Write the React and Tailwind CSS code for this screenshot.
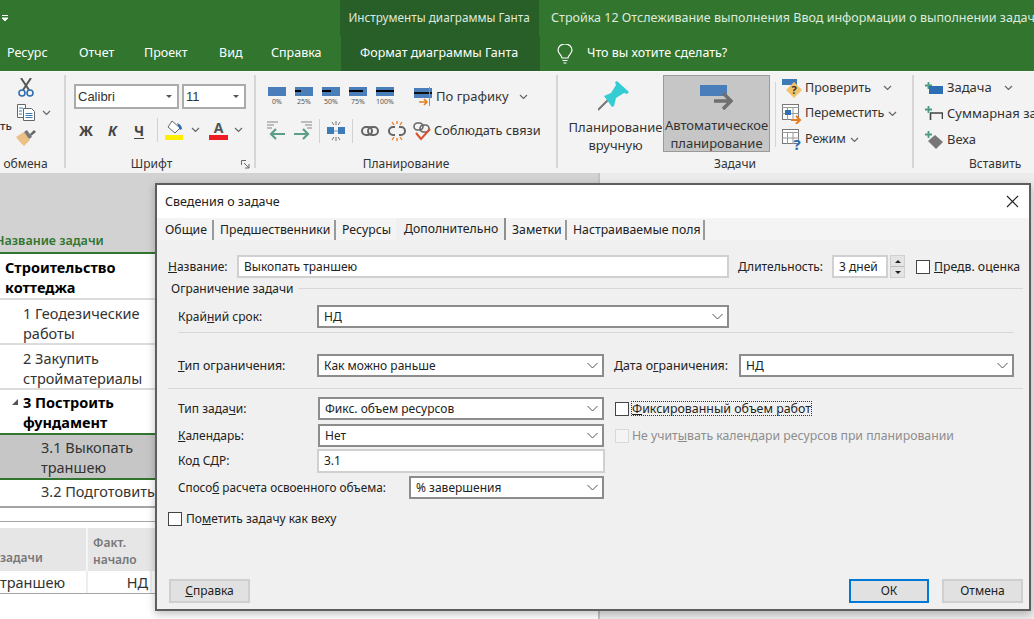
import React from "react";

const Chevron = ({ className = "" }) => (
  <svg width="9" height="6" viewBox="0 0 9 6" className={`shrink-0 ${className}`}>
    <path d="M1 1l3.500 3.500L8 1" fill="none" stroke="#666" strokeWidth="1.200" />
  </svg>
);

const SelectChevron = () => (
  <svg width="11" height="7" viewBox="0 0 11 7" className="shrink-0">
    <path d="M.5 1l5 5 5-5" fill="none" stroke="#555" strokeWidth="1" />
  </svg>
);

const Scissors = () => (
  <svg width="16" height="19" viewBox="0 0 16 19" className="shrink-0">
    <path d="M3 0l8 12M13 0L5 12" stroke="#555" strokeWidth="2" fill="none" />
    <circle cx="4" cy="15" r="3" fill="none" stroke="#2f6fae" strokeWidth="1.600" />
    <circle cx="12" cy="15" r="3" fill="none" stroke="#2f6fae" strokeWidth="1.600" />
  </svg>
);

const CopyIcon = () => (
  <svg width="18" height="17" viewBox="0 0 18 17" className="shrink-0">
    <path d="M.5.5h8v13h-8z" fill="#fff" stroke="#666" />
    <path d="M6.500 4.500h8l3 3v9h-11z" fill="#fff" stroke="#666" />
    <path d="M2 4h4M2 7h3M2 10h3" stroke="#3d7ab8" />
    <path d="M8.500 9.500h7M8.500 11.500h7M8.500 13.500h7" stroke="#3d7ab8" />
  </svg>
);

const Brush = () => (
  <svg width="20" height="17" viewBox="0 0 20 17" className="shrink-0">
    <path d="M0 8l8-5 6 8-6 6C5 14 2 11 0 8z" fill="#eac084" />
    <path d="M8 3l3-2 5 7-3 2z" fill="#777" />
    <path d="M14 5l4-4 2 2-5 4z" fill="#666" />
  </svg>
);

const FillIcon = () => (
  <svg width="19" height="20" viewBox="0 0 19 20" className="shrink-0">
    <path d="M7 1l8 7-5 5-7-6z" fill="#fff" stroke="#666" />
    <path d="M12 3c3 1 5 3 5 6l-2 1z" fill="#2d6fb2" />
    <rect x="0" y="15" width="18" height="5" fill="#ffee00" />
  </svg>
);

const ProgressBar = ({ line, label }) => (
  <div className="flex w-[18px] flex-col items-center">
    <div className="relative h-[9px] w-[18px] bg-[#4a7ebb]">
      {line > 0 && <div className="absolute left-0 top-[3px] h-[2px] bg-black" style={{ width: line }} />}
    </div>
    <span className="mt-[1px] text-[7px] leading-[9px] text-[#555]">{label}</span>
  </div>
);

const OnTrackIcon = () => (
  <svg width="19" height="19" viewBox="0 0 19 19" className="shrink-0">
    <rect x="0" y="1" width="18" height="10" fill="#4a7ebb" />
    <rect x="0" y="5" width="18" height="2" fill="#111" />
    <path d="M15.500 0v19" stroke="#e87d1e" />
    <path d="M5 15h8M10 12l3 3-3 3" stroke="#e87d1e" strokeWidth="1.600" fill="none" />
  </svg>
);

const ArrowLines = ({ flip }) => (
  <svg width="18" height="20" viewBox="0 0 18 20" className="shrink-0" style={{ transform: flip ? "scaleX(-1)" : undefined }}>
    <path d="M0 1h11M0 4h7M0 7h5" stroke="#aaa" strokeWidth="1.500" />
    <path d="M18 13H4M9 8l-5 5 5 5" stroke="#5b9e8a" strokeWidth="2.200" fill="none" />
  </svg>
);

const SplitIcon = () => (
  <svg width="18" height="20" viewBox="0 0 18 20" className="shrink-0">
    <path d="M9 0v4M5 1l2 3M13 1l-2 3M9 16v4M5 19l2-3M13 19l-2-3" stroke="#777" />
    <rect x="0" y="6" width="7" height="7" fill="#3d7ab8" />
    <rect x="11" y="6" width="7" height="7" fill="#3d7ab8" />
    <rect x="7" y="9" width="4" height="2" fill="#a9c6e3" />
  </svg>
);

const LinkIcon = () => (
  <svg width="18" height="10" viewBox="0 0 18 10" className="shrink-0">
    <rect x="1" y="1" width="10" height="8" rx="4" fill="none" stroke="#666" strokeWidth="2" />
    <rect x="7" y="1" width="10" height="8" rx="4" fill="none" stroke="#666" strokeWidth="2" />
  </svg>
);

const UnlinkIcon = () => (
  <svg width="18" height="20" viewBox="0 0 18 20" className="shrink-0">
    <path d="M7 6H5a4 4 0 000 8h2M11 6h2a4 4 0 010 8h-2" fill="none" stroke="#666" strokeWidth="2" />
    <path d="M9 0v3M4 1l2 3M14 1l-2 3M9 17v3M4 19l2-3M14 19l-2-3" stroke="#e87d1e" strokeWidth="1.300" />
  </svg>
);

const RespectIcon = () => (
  <svg width="18" height="19" viewBox="0 0 18 19" className="shrink-0">
    <rect x="1" y="1" width="9" height="7" rx="3.500" fill="none" stroke="#666" strokeWidth="1.600" />
    <rect x="7" y="3" width="9" height="7" rx="3.500" fill="none" stroke="#666" strokeWidth="1.600" />
    <path d="M3 11l5 6 9-10" fill="none" stroke="#d9512c" strokeWidth="2" />
  </svg>
);

const PinIcon = () => (
  <svg width="31" height="30" viewBox="0 0 31 30" className="ml-[-4px] shrink-0">
    <path d="M0 29l10-10" stroke="#777" strokeWidth="2" />
    <path d="M6 15l7-3 5-8-1-3 2-1 12 11-2 2-3-1-8 5-2 8-2 1z" fill="#35cdd3" />
  </svg>
);

const AutoIcon = () => (
  <svg width="33" height="25" viewBox="0 0 33 25" className="shrink-0">
    <rect x="0" y="0" width="27" height="11" fill="#4a7ebb" />
    <path d="M14 16h17M23 8l8 8-8 8" fill="none" stroke="#6f6f6f" strokeWidth="3.500" />
  </svg>
);

const InspectIcon = () => (
  <svg width="20" height="19" viewBox="0 0 20 19" className="shrink-0">
    <rect x="0" y="0" width="15" height="6" fill="#3d7ab8" />
    <path d="M12 3l8 8-8 8-8-8z" fill="#f2c26b" />
    <text x="12" y="15" textAnchor="middle" fontSize="11" fontWeight="700" fill="#333" fontFamily="Noto Sans">?</text>
  </svg>
);

const MoveIcon = () => (
  <svg width="20" height="20" viewBox="0 0 20 20" className="shrink-0">
    <rect x=".5" y=".5" width="16" height="15" fill="#fff" stroke="#777" />
    <path d="M0 3.500h17M5.500 3v13M11 3v13M0 9.500h17" stroke="#999" />
    <rect x="3" y="6" width="6" height="5" fill="#2d6fb2" />
    <path d="M9 16h9M14 12l4 4-4 4" fill="none" stroke="#e87d1e" strokeWidth="2" />
  </svg>
);

const ModeIcon = () => (
  <svg width="20" height="22" viewBox="0 0 20 22" className="shrink-0">
    <rect x=".5" y=".5" width="16" height="14" fill="#fff" stroke="#777" />
    <path d="M0 3.500h17M5.500 3v12M11 3v12M0 9h17" stroke="#999" />
    <text x="15" y="21" textAnchor="middle" fontSize="15" fontWeight="700" fill="#2d6fb2" fontFamily="Noto Sans">?</text>
  </svg>
);

const AddTaskIcon = () => (
  <svg width="18" height="13" viewBox="0 0 18 13" className="shrink-0">
    <path d="M3.500 0v7M0 3.500h7" stroke="#4a9a86" strokeWidth="1.800" />
    <rect x="4" y="4" width="14" height="8" fill="#2d6fb2" />
  </svg>
);

const AddSummaryIcon = () => (
  <svg width="18" height="15" viewBox="0 0 18 15" className="shrink-0">
    <path d="M3.500 0v7M0 3.500h7" stroke="#4a9a86" strokeWidth="1.800" />
    <path d="M5 7h13M5.500 7v7M17.500 7v6" stroke="#444" strokeWidth="1.600" fill="none" />
  </svg>
);

const AddMilestoneIcon = () => (
  <svg width="18" height="18" viewBox="0 0 18 18" className="shrink-0">
    <path d="M10 4l8 7-7 7-8-8z" fill="#777" />
    <path d="M3.500 0v7M0 3.500h7" stroke="#4a9a86" strokeWidth="1.800" />
  </svg>
);

const Bulb = () => (
  <svg width="16" height="20" viewBox="0 0 16 20" className="shrink-0">
    <path d="M5 14c0-3-4-4-4-8a7 6 0 0114 0c0 4-4 5-4 8z" fill="none" stroke="#fff" strokeWidth="1.200" />
    <path d="M5.500 16.500h5M6.500 19h3" stroke="#fff" strokeWidth="1.200" />
  </svg>
);

const RibbonSep = () => <div className="h-[93px] w-[2px] shrink-0 bg-[#d6d6d6]" />;

const GroupLabel = ({ children }) => (
  <div className="h-[18px] whitespace-nowrap text-center text-[12px] leading-[18px] text-[#333]">{children}</div>
);

const SmallSep = () => <div className="mx-[7px] h-[24px] w-[1px] bg-[#d2d2d2]" />;

const Ribbon = () => (
  <div className="flex h-[102px] border-t border-[#f8f8f8] bg-[#f3f3f3] pt-[3px] text-[12.500px] text-[#333]">
    <div className="flex h-[98px] w-[64px] shrink-0 flex-col">
      <div className="relative flex h-[80px] flex-col items-center pr-[12px]">
        <div className="mt-[3px]"><Scissors /></div>
        <div className="mt-[7px] flex items-center">
          <CopyIcon />
          <Chevron className="ml-[7px] mr-[-16px]" />
        </div>
        <div className="mt-[8px]"><Brush /></div>
        <span className="absolute left-0 top-[43px] text-[11.500px] font-medium leading-[16px]">ть</span>
      </div>
      <GroupLabel><span className="ml-[-13px]">обмена</span></GroupLabel>
    </div>
    <RibbonSep />
    <div className="flex h-[98px] w-[188px] shrink-0 flex-col pl-[8px]">
      <div className="h-[80px] pt-[9px]">
        <div className="flex gap-[3px]">
          <div className="flex h-[25px] w-[105px] items-center justify-between border-2 border-[#ababab] bg-white pl-[2px] pr-[5px] font-['Liberation_Sans'] text-[13px]">
            Calibri
            <div className="h-0 w-0 border-x-[3px] border-t-[3px] border-x-transparent border-t-[#555]" />
          </div>
          <div className="flex h-[25px] w-[64px] items-center justify-between border-2 border-[#ababab] bg-white pl-[2px] pr-[5px] font-['Liberation_Sans'] text-[13px]">
            11
            <div className="h-0 w-0 border-x-[3px] border-t-[3px] border-x-transparent border-t-[#555]" />
          </div>
        </div>
        <div className="mt-[9px] flex h-[24px] items-center pl-[5px]">
          <span className="w-[29px] text-[14px] font-bold text-[#444]">Ж</span>
          <span className="w-[26px] text-[14px] font-bold italic text-[#444]">К</span>
          <span className="w-[23px] text-[14px] font-bold text-[#444] underline underline-offset-2">Ч</span>
          <div className="h-[24px] w-[1px] bg-[#d2d2d2]" />
          <div className="ml-[7px]"><FillIcon /></div>
          <Chevron className="ml-[7px]" />
          <div className="ml-[9px] flex w-[19px] flex-col items-center">
            <span className="text-[14px] font-bold leading-[15px] text-[#555]">А</span>
            <div className="h-[5px] w-[19px] bg-[#ee1c25]" />
          </div>
          <Chevron className="ml-[6px]" />
        </div>
      </div>
      <div className="flex items-center">
        <div className="flex-1 pr-[12px]"><GroupLabel>Шрифт</GroupLabel></div>
        <svg width="9" height="9" viewBox="0 0 9 9" className="mr-[4px]">
          <path d="M.5 5V.5H5M3 3l5 5M8 4v4H4" fill="none" stroke="#666" />
        </svg>
      </div>
    </div>
    <RibbonSep />
    <div className="flex h-[98px] w-[300px] shrink-0 flex-col pl-[12px]">
      <div className="h-[80px] pt-[12px]">
        <div className="flex h-[24px] items-start">
          <div className="flex w-[124px] gap-[9px]">
            <ProgressBar line={0} label="0%" />
            <ProgressBar line={6} label="25%" />
            <ProgressBar line={9} label="50%" />
            <ProgressBar line={14} label="75%" />
            <ProgressBar line={18} label="100%" />
          </div>
          <div className="ml-[22px] flex items-center">
            <OnTrackIcon />
            <span className="ml-[3px] text-[13px] leading-[19px]">По графику</span>
            <Chevron className="ml-[10px]" />
          </div>
        </div>
        <div className="ml-[-1px] mt-[8px] flex h-[24px] items-center">
          <ArrowLines flip={false} />
          <div className="ml-[9px]"><ArrowLines flip /></div>
          <SmallSep />
          <SplitIcon />
          <SmallSep />
          <div className="ml-[1px]"><LinkIcon /></div>
          <div className="ml-[9px]"><UnlinkIcon /></div>
          <div className="ml-[7px]"><RespectIcon /></div>
          <span className="ml-[3px] whitespace-nowrap text-[12.750px]">Соблюдать связи</span>
        </div>
      </div>
      <div className="pr-[12px]"><GroupLabel>Планирование</GroupLabel></div>
    </div>
    <RibbonSep />
    <div className="flex h-[98px] w-[354px] shrink-0 flex-col">
      <div className="flex h-[80px]">
        <div className="ml-[11px] flex w-[93px] shrink-0 flex-col items-center pt-[6px]">
          <PinIcon />
          <div className="mt-[7px] text-center text-[13px] leading-[18px]">Планирование<br />вручную</div>
        </div>
        <div className="ml-[1px] flex h-[77px] w-[107px] shrink-0 flex-col items-center border border-[#9a9a9a] bg-[#c6c6c6] pt-[9px]">
          <AutoIcon />
          <div className="mt-[6px] whitespace-nowrap text-center text-[13px] leading-[18px]">Автоматическое<br />планирование</div>
        </div>
        <div className="mx-[5px] mt-[7px] h-[65px] w-[1px] shrink-0 bg-[#d6d6d6]" />
        <div className="flex flex-col pl-[1px] pt-[1px]">
          <div className="flex h-[24px] items-center"><InspectIcon /><span className="ml-[3px]">Проверить</span><Chevron className="ml-[12px]" /></div>
          <div className="mt-[1px] flex h-[25px] items-center"><MoveIcon /><span className="ml-[3px]">Переместить</span><Chevron className="ml-[4px]" /></div>
          <div className="mt-[1px] flex h-[25px] items-center"><ModeIcon /><span className="ml-[3px]">Режим</span><Chevron className="ml-[4px]" /></div>
        </div>
      </div>
      <GroupLabel>Задачи</GroupLabel>
    </div>
    <RibbonSep />
    <div className="flex h-[98px] min-w-0 flex-1 flex-col overflow-hidden pl-[11px]">
      <div className="flex h-[80px] flex-col pt-[1px]">
        <div className="flex h-[24px] items-center"><AddTaskIcon /><span className="ml-[4px] text-[13px]">Задача</span><Chevron className="ml-[12px]" /></div>
        <div className="mt-[1px] flex h-[25px] items-center"><AddSummaryIcon /><span className="ml-[4px] whitespace-nowrap text-[13px]">Суммарная задача</span></div>
        <div className="mt-[1px] flex h-[25px] items-center"><AddMilestoneIcon /><span className="ml-[4px] text-[13px]">Веха</span></div>
      </div>
      <div className="w-[50px] translate-x-[44px]"><GroupLabel>Вставить</GroupLabel></div>
    </div>
  </div>
);

const TitleBar = () => (
  <div className="flex h-[71px] flex-col bg-[#31752f] text-white">
    <div className="flex h-[36px]">
      <div className="w-[341px] pl-[1px] pt-[15px]">
        <svg width="8" height="7" viewBox="0 0 8 7"><path d="M1 .5h6M1 3l3 3 3-3z" stroke="#fff" fill="#fff" /></svg>
      </div>
      <div className="flex w-[199px] items-center whitespace-nowrap bg-[#285e27] pl-[8px] text-[11.750px] text-[#dfe9de]">Инструменты диаграммы Ганта</div>
      <div className="flex items-center overflow-hidden whitespace-nowrap pl-[12px] text-[12.500px] text-[#dfe9de]">Стройка 12 Отслеживание выполнения Ввод информации о выполнении задач</div>
    </div>
    <div className="flex h-[35px] items-center text-[12.500px]">
      <div className="flex h-full w-[341px] items-center pl-[7px]">
        <span className="w-[72px]">Ресурс</span>
        <span className="w-[65px]">Отчет</span>
        <span className="w-[75px]">Проект</span>
        <span className="w-[52px]">Вид</span>
        <span>Справка</span>
      </div>
      <div className="flex h-full w-[199px] items-center whitespace-nowrap bg-[#285e27] pl-[19px]">Формат диаграммы Ганта</div>
      <div className="ml-[17px]"><Bulb /></div>
      <span className="ml-[14px]">Что вы хотите сделать?</span>
    </div>
  </div>
);

const TaskRow = ({ indent, bold, lines, height, selected, last, arrow, className = "" }) => (
  <div
    className={`relative flex shrink-0 flex-col justify-center text-[14.500px] leading-[20px] ${bold ? "font-bold text-black" : "text-[#333]"} ${selected ? "border-y-2 border-[#31752f] bg-[#c6c6c6]" : last ? "bg-white" : "border-b-2 border-[#dcdcdc] bg-white pt-[2px]"} ${className}`}
    style={{ height, paddingLeft: indent }}
  >
    {arrow && <div className="absolute left-[12px] top-[9px] h-0 w-0 border-b-[6px] border-l-[6px] border-b-[#555] border-l-transparent" />}
    {lines.map((t) => (
      <div key={t} className="whitespace-nowrap">{t}</div>
    ))}
  </div>
);

const LeftPane = () => (
  <div className="flex w-[598px] shrink-0 flex-col overflow-hidden">
    <div className="flex h-[79px] items-end bg-[#d2d2d2]">
      <div className="ml-[-5px] h-[20px] whitespace-nowrap text-[12.500px] font-semibold leading-[18px] text-[#31752f]">Название задачи</div>
    </div>
    <div className="h-[2px] bg-[#31752f]" />
    <TaskRow indent={5} bold lines={["Строительство", "коттеджа"]} height={46} />
    <TaskRow indent={23} lines={["1 Геодезические", "работы"]} height={45} />
    <TaskRow indent={23} lines={["2 Закупить", "стройматериалы"]} height={45} />
    <TaskRow indent={23} bold arrow lines={["3 Построить", "фундамент"]} height={43} last />
    <TaskRow indent={41} selected lines={["3.1 Выкопать", "траншею"]} height={47} />
    <TaskRow indent={41} lines={["3.2 Подготовить"]} height={26} last className="pb-[4px]" />
    <div className="h-[2px] shrink-0 bg-[#a5a5a5]" />
    <div className="h-[14px] shrink-0 border-b border-[#a5a5a5] bg-white" />
    <div className="h-[6px] shrink-0 bg-white" />
    <div className="flex h-[43px] shrink-0 bg-[#e6e6e6] text-[12px] font-semibold leading-[17px] text-[#777]">
      <div className="flex w-[86px] items-end pb-[5px]">задачи</div>
      <div className="w-[66px] border-l-2 border-[#f5f5f5] pb-[5px] pl-[5px] pt-[6px]">Факт.<br />начало</div>
    </div>
    <div className="flex h-[23px] shrink-0 border-b border-[#a5a5a5] bg-white text-[14.500px] leading-[22px] text-[#333]">
      <div className="w-[86px] overflow-hidden">траншею</div>
      <div className="w-[66px] border-x-2 border-[#eeeeee] pr-[2px] text-right">НД</div>
    </div>
  </div>
);

const Field = ({ w, h = 23, chevron, strong = true, children }) => (
  <div
    className={`flex shrink-0 items-center justify-between bg-white pl-[5px] pr-[4px] ${strong ? "border-2 border-[#8c8c8c]" : "border-2 border-[#d0d0d0]"}`}
    style={{ width: w, height: h }}
  >
    <span className="whitespace-nowrap">{children}</span>
    {chevron && <SelectChevron />}
  </div>
);

const Check = ({ disabled }) => (
  <div className={`h-[14px] w-[14px] shrink-0 border-[1.500px] ${disabled ? "border-[#d8d8d8] bg-[#f4f4f4]" : "border-[#444] bg-white"}`} />
);

const Label = ({ children, w }) => (
  <div className="shrink-0 whitespace-nowrap" style={{ width: w }}>{children}</div>
);

const Tab = ({ w, active, sep = true, children }) => (
  <div
    className={`flex shrink-0 items-center whitespace-nowrap ${active ? "mt-[-1px] h-[22px] border-r-2 border-[#8f8f8f] bg-[#f0f0f0] pl-[8px] text-[12.250px]" : sep ? "h-[20px] border-r-2 border-[#9a9a9a] pl-[6px] text-[12.250px]" : "h-[20px] pl-[6px] text-[12.250px]"}`}
    style={{ width: w }}
  >
    {children}
  </div>
);

const DialogButton = ({ w, primary, children }) => (
  <div
    className={`flex h-[24px] items-center justify-center bg-[#e1e1e1] ${primary ? "border-2 border-[#0078d7]" : "border-2 border-[#cfcfcf]"}`}
    style={{ width: w }}
  >
    {children}
  </div>
);

const Dialog = () => (
  <div className="absolute left-[155px] top-[183px] flex h-[428px] w-[876px] flex-col border-2 border-[#5e5e5e] bg-[#f0f0f0] text-[12px] leading-[16px] text-[#222] shadow-[0_3px_8px_rgba(0,0,0,0.25)]">
    <div className="flex h-[33px] shrink-0 items-center justify-between bg-white pl-[8px] pr-[10px] text-[12.500px]">
      Сведения о задаче
      <svg width="13" height="13" viewBox="0 0 13 13"><path d="M1 1l11 11M12 1L1 12" stroke="#222" strokeWidth="1.100" /></svg>
    </div>
    <div className="flex h-[22px] shrink-0 items-end bg-[#f4f4f4] pl-[2px]">
      <Tab w={55}>Общие</Tab>
      <Tab w={122}>Предшественники</Tab>
      <Tab w={60} sep={false}>Ресурсы</Tab>
      <Tab w={110} active>Дополнительно</Tab>
      <Tab w={61}>Заметки</Tab>
      <Tab w={138}>Настраиваемые поля</Tab>
    </div>
    <div className="flex min-h-0 flex-1 flex-col">
      <div className="mt-[15px] flex h-[23px] items-center pl-[11px]">
        <Label w={69}><u>Н</u>азвание:</Label>
        <Field w={492} strong={false}>Выкопать траншею</Field>
        <Label w={103}><span className="ml-[9px]"><u>Д</u>лительность:</span></Label>
        <Field w={56} strong={false}>3 дней</Field>
        <div className="ml-[2px] flex h-[23px] w-[15px] flex-col border border-[#d0d0d0] bg-[#e4e4e4]">
          <div className="flex flex-1 items-center justify-center"><div className="h-0 w-0 border-x-[3px] border-b-[3px] border-x-transparent border-b-[#222]" /></div>
          <div className="h-[1px] bg-[#bbb]" />
          <div className="flex flex-1 items-center justify-center"><div className="h-0 w-0 border-x-[3px] border-t-[3px] border-x-transparent border-t-[#222]" /></div>
        </div>
        <div className="ml-[11px]"><Check /></div>
        <span className="ml-[4px] whitespace-nowrap text-[12.250px]"><u>П</u>редв. оценка</span>
      </div>
      <div className="mt-[3px] flex h-[16px] items-center pl-[14px]">
        <span className="whitespace-nowrap">Ограничение задачи</span>
        <div className="ml-[5px] mr-[6px] h-[1px] flex-1 translate-y-[-1px] bg-[#d8d8d8]" />
      </div>
      <div className="mt-[8px] flex h-[23px] items-center pl-[21px]">
        <Label w={139}>Край<u>н</u>ий срок:</Label>
        <Field w={412} chevron>НД</Field>
      </div>
      <div className="ml-[21px] mr-[15px] mt-[4px] h-[1px] bg-[#d8d8d8]" />
      <div className="mt-[21px] flex h-[23px] items-center pl-[21px]">
        <Label w={139}><span className="text-[12.400px]"><u>Т</u>ип ограничения:</span></Label>
        <Field w={287} chevron>Как можно раньше</Field>
        <span className="ml-[10px] w-[125px] whitespace-nowrap text-[12.400px]">Дата о<u>г</u>раничения:</span>
        <Field w={275} chevron>НД</Field>
      </div>
      <div className="ml-[11px] mr-[6px] mt-[11px] h-[1px] bg-[#d8d8d8]" />
      <div className="mt-[8px] flex h-[23px] items-center pl-[21px]">
        <Label w={140}>Тип зада<u>ч</u>и:</Label>
        <Field w={286} chevron>Фикс. объем ресурсов</Field>
        <div className="ml-[11px]"><Check /></div>
        <span className="ml-[2px] whitespace-nowrap border border-dotted border-[#333] text-[12.400px] leading-[13px]"><u>Ф</u>иксированный объем работ</span>
      </div>
      <div className="mt-[4px] flex h-[23px] items-center pl-[21px]">
        <Label w={140}><u>К</u>алендарь:</Label>
        <Field w={286} chevron>Нет</Field>
        <div className="ml-[11px]"><Check disabled /></div>
        <span className="ml-[3px] whitespace-nowrap text-[12.250px] text-[#8d8d8d]">Не учит<u>ы</u>вать календари ресурсов при планировании</span>
      </div>
      <div className="mt-[2px] flex h-[24px] items-center pl-[21px]">
        <Label w={139}>Код С<u>Д</u>Р:</Label>
        <Field w={288} h={24} strong={false}>3.1</Field>
      </div>
      <div className="mt-[3px] flex h-[23px] items-center pl-[21px]">
        <Label w={231}><span className="text-[11.750px]">Спосо<u>б</u> расчета освоенного объема:</span></Label>
        <Field w={195} chevron>% завершения</Field>
      </div>
      <div className="mt-[12px] flex h-[16px] items-center pl-[11px]">
        <Check />
        <span className="ml-[4px] whitespace-nowrap">По<u>м</u>етить задачу как веху</span>
      </div>
      <div className="mb-[6px] mt-auto flex items-center pl-[12px] pr-[6px]">
        <DialogButton w={81}><span><u>С</u>правка</span></DialogButton>
        <div className="ml-auto"><DialogButton w={80} primary>ОК</DialogButton></div>
        <div className="ml-[13px]"><DialogButton w={81}>Отмена</DialogButton></div>
      </div>
    </div>
  </div>
);

export default function App() {
  return (
    <div className="relative flex h-[619px] w-[1034px] flex-col overflow-hidden bg-white font-['Noto_Sans',sans-serif]">
      <TitleBar />
      <Ribbon />
      <div className="flex min-h-0 flex-1">
        <LeftPane />
        <div className="flex-1 border-l-2 border-[#c4c4c4] bg-[#ececec]" />
      </div>
      <Dialog />
    </div>
  );
}
